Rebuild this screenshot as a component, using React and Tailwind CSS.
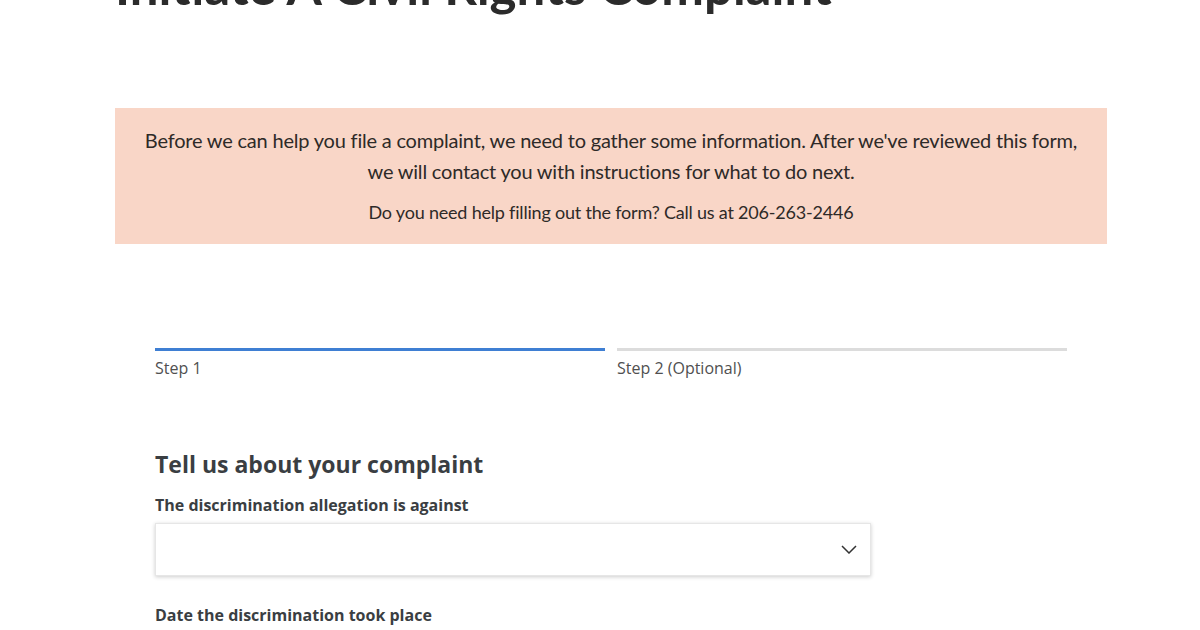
export default function App() {
  return (
    <div className="w-[1200px] h-[630px] overflow-hidden bg-white">
      <div className="pl-[115px] pr-[93px]">
        <h1 className="mt-[-40px] h-[51px] text-[51px] leading-[51px] font-bold text-[#2b2b2b] font-['Lato',sans-serif] whitespace-nowrap">
          Initiate A Civil Rights Complaint
        </h1>

        <div className="mt-[97px] bg-[#f9d6c7] px-[20px] pt-[17px] pb-[19px] text-center text-[#2e2a28] font-['Lato',sans-serif]">
          <p className="text-[20px] leading-[31px] tracking-[-0.2px]">
            Before we can help you file a complaint, we need to gather some information. After we've reviewed this form,
            we will contact you with instructions for what to do next.
          </p>
          <p className="mt-[12px] text-[18px] leading-[26px] tracking-[-0.2px]">Do you need help filling out the form? Call us at 206-263-2446</p>
        </div>
      </div>

      <div className="pl-[155px] pr-[133px] font-['Open_Sans',sans-serif]">
        <div className="mt-[104px] grid grid-cols-2 gap-[12px]">
          <div>
            <div className="h-[3px] bg-[#3f7fd3]"></div>
            <div className="mt-[5px] text-[16px] leading-[24px] text-[#505050]">Step 1</div>
          </div>
          <div>
            <div className="h-[3px] bg-[#dcdcdc]"></div>
            <div className="mt-[5px] text-[16px] leading-[24px] text-[#505050]">Step 2 (Optional)</div>
          </div>
        </div>

        <h2 className="mt-[68px] text-[23px] leading-[32px] font-bold text-[#3a3e42]">Tell us about your complaint</h2>
        <label className="block mt-[13px] text-[16px] leading-[24px] font-bold text-[#3a3e42]">
          The discrimination allegation is against
        </label>
        <div className="mt-[6px] w-[716px] h-[53px] bg-white border border-[#e6e6e6] shadow-[0_1px_4px_rgba(0,0,0,0.2)] flex items-center justify-end pr-[13px]">
          <svg width="16" height="9" viewBox="0 0 16 9" fill="none" stroke="#333" strokeWidth="1.5">
            <path d="M1 1 L8 8 L15 1" />
          </svg>
        </div>
        <label className="block mt-[27px] text-[16px] leading-[24px] font-bold text-[#3a3e42]">
          Date the discrimination took place
        </label>
      </div>
    </div>
  );
}
